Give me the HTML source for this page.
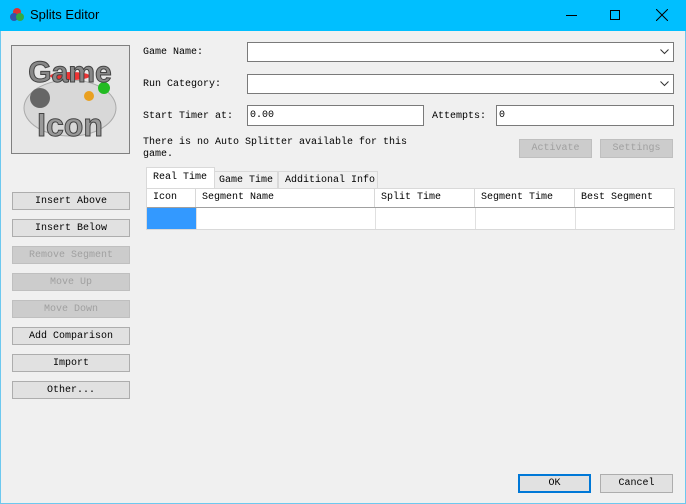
<!DOCTYPE html>
<html><head><style>
*{box-sizing:border-box;margin:0;padding:0}
body{width:686px;height:504px;background:#f0f0f0;font-family:"Liberation Mono",monospace;font-size:10px;color:#000;position:relative;overflow:hidden;white-space:nowrap}
.a{position:absolute}
.tb{left:0;top:0;width:686px;height:31px;background:#00bfff}
.in{background:#fff;border:1px solid #7a7a7a}
.btn{position:absolute;left:12px;width:118px;height:18px;border:1px solid #adadad;background:#e1e1e1;text-align:center;line-height:17px}
.dis{background:#ccc;color:#a0a0a0;border-color:#bfbfbf}
.hd{position:absolute;top:0;height:18px;border-right:1px solid #d8d8d8;padding-left:6px;line-height:18px;background:#fff}
</style></head><body>
<div class="a tb"></div>
<svg class="a" style="left:9px;top:7px" width="16" height="16"><circle cx="8" cy="5" r="4" fill="#d33"/><circle cx="5" cy="10" r="4" fill="#35a"/><circle cx="11" cy="10" r="4" fill="#3a4"/></svg>
<div class="a" style="left:30px;top:7px;font-family:'Liberation Sans',sans-serif;font-size:13px">Splits Editor</div>
<div class="a" style="left:566px;top:15px;width:11px;height:1px;background:#000"></div>
<div class="a" style="left:610px;top:10px;width:10px;height:10px;border:1px solid #000"></div>
<svg class="a" style="left:656px;top:9px" width="12" height="12"><path d="M0 0L12 12M12 0L0 12" stroke="#000" stroke-width="1"/></svg>
<div class="a" style="left:0;top:31px;width:1px;height:473px;background:#6cc8ef"></div>
<div class="a" style="left:685px;top:31px;width:1px;height:473px;background:#6cc8ef"></div>
<div class="a" style="left:0;top:503px;width:686px;height:1px;background:#6cc8ef"></div>

<div class="a" style="left:11px;top:45px;width:119px;height:109px;border:1px solid #808080;background:#e6e6e6"></div>
<svg class="a" style="left:12px;top:46px" width="117" height="107">
<ellipse cx="58" cy="62" rx="46" ry="28" fill="#d8d8d8" stroke="#aaa"/>
<circle cx="28" cy="52" r="10" fill="#666"/><circle cx="77" cy="50" r="5" fill="#e9a020"/><circle cx="92" cy="42" r="6" fill="#2b2"/><ellipse cx="58" cy="30" rx="20" ry="4" fill="#e33"/>
<text x="58" y="36" text-anchor="middle" font-family="Liberation Sans" font-weight="bold" font-size="30" fill="#888" stroke="#444" stroke-width="1">Game</text>
<text x="58" y="90" text-anchor="middle" font-family="Liberation Sans" font-weight="bold" font-size="32" fill="#999" stroke="#444" stroke-width="1">Icon</text>
</svg>

<div class="a" style="left:143px;top:47px">Game Name:</div>
<div class="a in" style="left:247px;top:42px;width:427px;height:20px"></div>
<svg class="a" style="left:660px;top:49px" width="9" height="6"><path d="M0.5 0.5L4.5 4.5L8.5 0.5" fill="none" stroke="#333"/></svg>
<div class="a" style="left:143px;top:79px">Run Category:</div>
<div class="a in" style="left:247px;top:74px;width:427px;height:20px"></div>
<svg class="a" style="left:660px;top:81px" width="9" height="6"><path d="M0.5 0.5L4.5 4.5L8.5 0.5" fill="none" stroke="#333"/></svg>
<div class="a" style="left:143px;top:111px">Start Timer at:</div>
<div class="a in" style="left:247px;top:105px;width:177px;height:21px;padding:4px 2px">0.00</div>
<div class="a" style="left:432px;top:111px">Attempts:</div>
<div class="a in" style="left:496px;top:105px;width:178px;height:21px;padding:4px 2px">0</div>
<div class="a" style="left:143px;top:137px;line-height:12px">There is no Auto Splitter available for this<br>game.</div>
<div class="a btn dis" style="left:519px;top:139px;width:73px;height:19px;line-height:18px">Activate</div>
<div class="a btn dis" style="left:600px;top:139px;width:73px;height:19px;line-height:18px">Settings</div>

<div class="a" style="left:214px;top:171px;width:64px;height:18px;border:1px solid #d9d9d9;border-bottom:none;padding:3px 4px">Game Time</div>
<div class="a" style="left:278px;top:171px;width:100px;height:18px;border:1px solid #d9d9d9;border-bottom:none;padding:3px 6px">Additional Info</div>
<div class="a" style="left:146px;top:167px;width:69px;height:22px;border:1px solid #d9d9d9;border-bottom:none;background:#fff;padding:4px 6px">Real Time</div>

<div class="a" style="left:146px;top:188px;width:529px;height:42px;background:#fff;border:1px solid #d9d9d9">
<div class="hd" style="left:0;width:49px">Icon</div>
<div class="hd" style="left:49px;width:179px">Segment Name</div>
<div class="hd" style="left:228px;width:100px">Split Time</div>
<div class="hd" style="left:328px;width:100px">Segment Time</div>
<div class="hd" style="left:428px;width:99px;border-right:none">Best Segment</div>
<div class="a" style="left:0;top:18px;width:527px;height:1px;background:#a0a0a0"></div>
<div class="a" style="left:0;top:19px;width:49px;height:21px;background:#3399ff"></div>
<div class="a" style="left:49px;top:19px;width:1px;height:21px;background:#e0e0e0"></div>
<div class="a" style="left:228px;top:19px;width:1px;height:21px;background:#e0e0e0"></div>
<div class="a" style="left:328px;top:19px;width:1px;height:21px;background:#e0e0e0"></div>
<div class="a" style="left:428px;top:19px;width:1px;height:21px;background:#e0e0e0"></div>
</div>

<div class="btn" style="top:192px">Insert Above</div>
<div class="btn" style="top:219px">Insert Below</div>
<div class="btn dis" style="top:246px">Remove Segment</div>
<div class="btn dis" style="top:273px">Move Up</div>
<div class="btn dis" style="top:300px">Move Down</div>
<div class="btn" style="top:327px">Add Comparison</div>
<div class="btn" style="top:354px">Import</div>
<div class="btn" style="top:381px">Other...</div>

<div class="btn" style="left:518px;top:474px;width:73px;height:19px;line-height:18px;border:1px solid #0078d7;box-shadow:inset 0 0 0 1px #0078d7">OK</div>
<div class="btn" style="left:600px;top:474px;width:73px;height:19px;line-height:18px">Cancel</div>
</body></html>
